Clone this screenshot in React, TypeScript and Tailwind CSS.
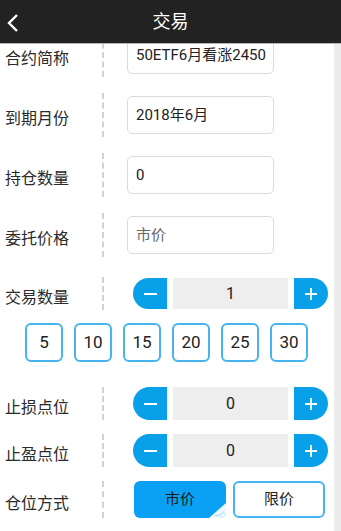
import type { ReactNode } from "react";

const QUICK = [5, 10, 15, 20, 25, 30];

function Row({
  label,
  className,
  children,
}: {
  label: string;
  className: string;
  children: ReactNode;
}) {
  return (
    <div className={`flex ${className}`}>
      <div className="w-[104px] shrink-0 flex items-center pt-2 pl-[5px] border-r-2 border-dashed border-[#d2d2d2] text-[16px] text-[#2a2a2a]">
        {label}
      </div>
      <div className="flex-1 flex items-center">{children}</div>
    </div>
  );
}

function Field({ value, muted }: { value: string; muted?: boolean }) {
  return (
    <div
      className={`ml-[23px] w-[147px] h-[38px] flex items-center pl-2 rounded-[5px] border border-[#dcdcdc] bg-white text-[15px] ${
        muted ? "text-[#666]" : "text-[#222]"
      }`}
    >
      {value}
    </div>
  );
}

function Stepper({ value, tall }: { value: string; tall?: boolean }) {
  const h = tall ? "h-[33px]" : "h-[31px]";
  return (
    <div className="ml-[29px] flex gap-[6px]">
      <button className={`w-[34px] ${h} rounded-l-full bg-[#08a0e9] flex items-center justify-center`}>
        <span className="block w-[13px] h-[2px] bg-white" />
      </button>
      <div className={`w-[115px] ${h} bg-[#eeeeee] flex items-center justify-center text-[16px] text-[#222]`}>
        {value}
      </div>
      <button className={`w-[34px] ${h} rounded-r-full bg-[#08a0e9] flex items-center justify-center`}>
        <svg width="14" height="14" viewBox="0 0 14 14">
          <path d="M7 1v12M1 7h12" stroke="white" strokeWidth="1.8" />
        </svg>
      </button>
    </div>
  );
}

export default function App() {
  return (
    <div
      className="w-[341px] h-[531px] overflow-hidden bg-white flex flex-col"
      style={{ fontFamily: '"Roboto", "Noto Sans CJK SC", sans-serif' }}
    >
      <div className="relative z-10 h-[44px] shrink-0 bg-[#222222] border-b border-[#b4b4b4] flex items-center justify-center">
        <svg className="absolute left-[6px] top-[13px]" width="14" height="20" viewBox="0 0 14 20">
          <path d="M11 2L3 10l8 8" fill="none" stroke="white" strokeWidth="2.4" />
        </svg>
        <span className="text-white text-[18px]">交易</span>
      </div>

      <div className="flex flex-1 min-h-0">
        <div className="flex-1 flex flex-col mt-[-11px]">
          <Row label="合约简称" className="h-[44px]">
            <Field value="50ETF6月看涨2450" />
          </Row>
          <Row label="到期月份" className="h-[44px] mt-[16px]">
            <Field value="2018年6月" />
          </Row>
          <Row label="持仓数量" className="h-[44px] mt-[16px]">
            <Field value="0" />
          </Row>
          <Row label="委托价格" className="h-[44px] mt-[16px]">
            <Field value="市价" muted />
          </Row>
          <Row label="交易数量" className="h-[33px] mt-[20px]">
            <Stepper value="1" />
          </Row>

          <div className="flex gap-[11px] pl-[25px] mt-[13px]">
            {QUICK.map((n) => (
              <button
                key={n}
                className="w-[38px] h-[39px] rounded-[6px] border-2 border-[#45b4f0] bg-white text-[17px] text-[#222] flex items-center justify-center"
              >
                {n}
              </button>
            ))}
          </div>

          <Row label="止损点位" className="h-[33px] mt-[25px]">
            <Stepper value="0" tall />
          </Row>
          <Row label="止盈点位" className="h-[33px] mt-[14px]">
            <Stepper value="0" tall />
          </Row>
          <Row label="仓位方式" className="h-[37px] mt-[14px]">
            <div className="ml-[30px] flex gap-[7px]">
              <button className="relative w-[92px] h-[37px] rounded-[6px] bg-[#0aa1f5] text-[15px] text-[#1a1a1a] flex items-center justify-center overflow-hidden">
                市价
                <svg className="absolute right-0 bottom-0" width="17" height="15" viewBox="0 0 17 15">
                  <polygon points="17,0 17,15 0,15" fill="#eef7fd" />
                  <path d="M6 12.5q4 1.5 9-4" fill="none" stroke="#9fd3f5" strokeWidth="1" />
                </svg>
              </button>
              <button className="w-[92px] h-[37px] rounded-[6px] border-2 border-[#45b4f0] bg-white text-[15px] text-[#222] flex items-center justify-center">
                限价
              </button>
            </div>
          </Row>
        </div>
        <div className="w-[7px] shrink-0 bg-[#ececec]" />
      </div>
    </div>
  );
}
